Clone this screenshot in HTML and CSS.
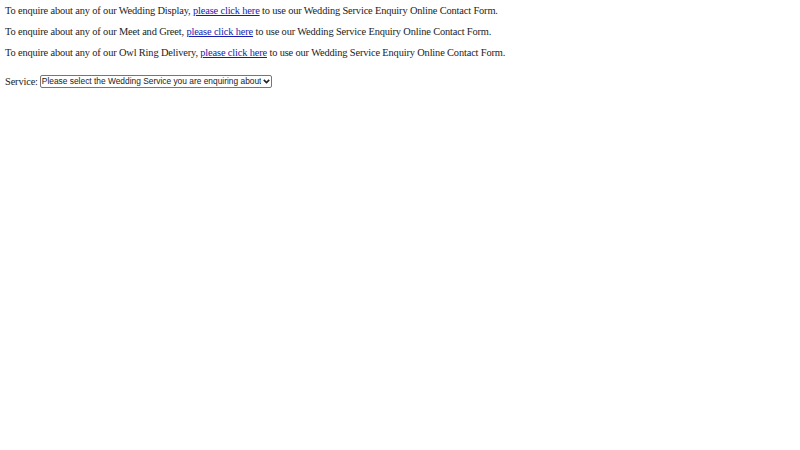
FILE: index.html
```html
<!DOCTYPE html>
<html>
<head>
<meta charset="utf-8">
<link rel="stylesheet" href="styles.css">
</head>
<body>
<div class="page">
  <p class="line">To enquire about any of our Wedding Display, <a href="#">please click here</a> to use our Wedding Service Enquiry Online Contact Form.</p>
  <p class="line">To enquire about any of our Meet and Greet, <a href="#">please click here</a> to use our Wedding Service Enquiry Online Contact Form.</p>
  <p class="line">To enquire about any of our Owl Ring Delivery, <a href="#">please click here</a> to use our Wedding Service Enquiry Online Contact Form.</p>
  <form class="service-form">
    <label for="service">Service:</label>
    <span class="select-wrap">
      <select id="service" class="service-select">
        <option>Please select the Wedding Service you are enquiring about</option>
      </select>
      <svg class="chevron" width="7" height="5" viewBox="0 0 7 5"><path d="M0.8 0.9 L3.5 3.6 L6.2 0.9" fill="none" stroke="#222" stroke-width="1.6"/></svg>
    </span>
  </form>
</div>
</body>
</html>
```
FILE: styles.css
```css
html, body {
  margin: 0;
  padding: 0;
  background: #fff;
}
.page {
  padding: 4px 5px;
  font-family: "Liberation Serif", "Times New Roman", serif;
  font-size: 10.4px;
  letter-spacing: -0.15px;
  color: #222;
}
.line {
  margin: 0 0 9px;
  line-height: 12px;
  padding-top: 1px;
  margin-bottom: 8px;
}
.line a {
  color: #1a1ab0;
}
.service-form {
  margin-top: 16px;
  display: flex;
  align-items: center;
  gap: 2px;
  line-height: 12px;
}
.select-wrap {
  position: relative;
  display: inline-flex;
}
.service-select {
  appearance: none;
  -webkit-appearance: none;
  font-family: "Liberation Sans", Arial, sans-serif;
  font-size: 8.4px;
  letter-spacing: 0;
  width: 232px;
  height: 13px;
  padding: 0 10px 0 1px;
  margin: 0;
  border: 1px solid #767676;
  border-radius: 2px;
  background: #fff;
  color: #222;
  line-height: 11px;
}
.chevron {
  position: absolute;
  right: 2px;
  top: 4px;
  pointer-events: none;
}
```
